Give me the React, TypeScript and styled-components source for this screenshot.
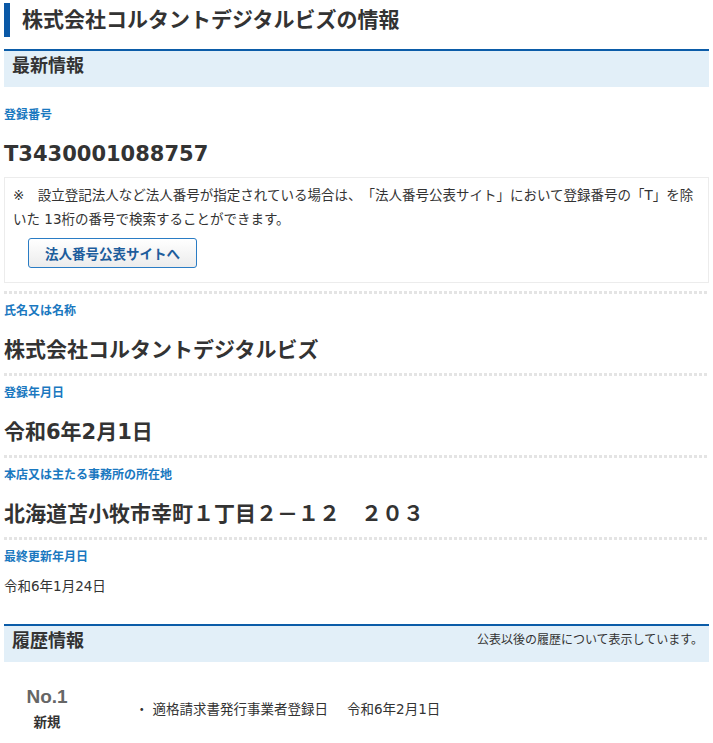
import React from 'react';
import styled, { createGlobalStyle } from 'styled-components';

const GlobalStyle = createGlobalStyle`
    body {
        margin: 0;
        background: #fff;
        color: #333;
        font-family: "DejaVu Sans", "Noto Sans CJK JP", sans-serif;
        text-spacing-trim: space-all;
    }
`;

interface IField {
    label: string;
    value: string;
    small?: boolean;
}

const fields: IField[] = [
    { label: '氏名又は名称', value: '株式会社コルタントデジタルビズ' },
    { label: '登録年月日', value: '令和6年2月1日' },
    { label: '本店又は主たる事務所の所在地', value: '北海道苫小牧市幸町１丁目２－１２　２０３' },
    { label: '最終更新年月日', value: '令和6年1月24日', small: true },
];

const FieldBlock: React.FC<IField> = ({ label, value, small }) => (
    <Field>
        <Label>{label}</Label>
        <Value $small={small}>{value}</Value>
    </Field>
);

export default function App() {
    return (
        <Page>
            <GlobalStyle />
            <Title>株式会社コルタントデジタルビズの情報</Title>

            <SectionHeader>
                <h3>最新情報</h3>
            </SectionHeader>
            <FieldList>
                <FieldBlock label="登録番号" value="T3430001088757" />
                <NoteBox>
                    <p>※　設立登記法人など法人番号が指定されている場合は、「法人番号公表サイト」において登録番号の「T」を除いた 13桁の番号で検索することができます。</p>
                    <SiteButton type="button">法人番号公表サイトへ</SiteButton>
                </NoteBox>
                {fields.map((f) => (
                    <React.Fragment key={f.label}>
                        <Separator />
                        <FieldBlock {...f} />
                    </React.Fragment>
                ))}
            </FieldList>

            <SectionHeader $spaced>
                <h3>履歴情報</h3>
                <small>公表以後の履歴について表示しています。</small>
            </SectionHeader>
            <HistoryRow>
                <HistoryNo>
                    <strong>No.1</strong>
                    <span>新規</span>
                </HistoryNo>
                <HistoryItem>
                    <span>・</span>
                    <span>適格請求書発行事業者登録日</span>
                    <span>令和6年2月1日</span>
                </HistoryItem>
            </HistoryRow>
        </Page>
    );
}

const Page = styled.div`
    padding: 3px 4px 0 4px;
`;

const Title = styled.h2`
    margin: 0;
    border-left: 6px solid #0a58a6;
    padding-left: 12px;
    font-size: 21px;
    font-weight: bold;
    line-height: 34px;
    color: #333;
`;

const SectionHeader = styled.div<{ $spaced?: boolean }>`
    margin-top: ${(p) => (p.$spaced ? '19px' : '12px')};
    border-top: 2px solid #0b5ca8;
    background-color: #e2eff8;
    height: 36px;
    padding: 0 6px 0 8px;
    display: flex;
    justify-content: space-between;
    align-items: flex-start;

    h3 {
        margin: 0;
        font-size: 18px;
        font-weight: bold;
        line-height: 30px;
    }

    small {
        font-size: 12px;
        line-height: 28px;
    }
`;

const FieldList = styled.div`
    padding-top: 11px;
`;

const Field = styled.div`
    padding: 8px 0;
`;

const Label = styled.div`
    font-size: 12px;
    font-weight: bold;
    line-height: 18px;
    color: #1a78c0;
`;

const Value = styled.div<{ $small?: boolean }>`
    margin-top: ${(p) => (p.$small ? '9px' : '15px')};
    font-size: ${(p) => (p.$small ? '13.5px' : '21px')};
    font-weight: ${(p) => (p.$small ? 'normal' : 'bold')};
    line-height: ${(p) => (p.$small ? '22px' : '30px')};
`;

const NoteBox = styled.div`
    border: 1px solid #ececec;
    padding: 5px 8px 14px 8px;
    margin-bottom: 8px;

    p {
        margin: 0;
        font-size: 13.5px;
        line-height: 24px;
    }
`;

const SiteButton = styled.button`
    display: block;
    margin: 7px 0 0 15px;
    height: 30px;
    padding: 0 16px;
    border: 1px solid #2a7cc4;
    border-radius: 3px;
    background: linear-gradient(#ffffff, #ececec);
    color: #1d5d9c;
    font-family: inherit;
    font-size: 13.5px;
    font-weight: bold;
`;

const Separator = styled.div`
    height: 3px;
    background-image: repeating-linear-gradient(90deg, #e4e4e4 0 3px, transparent 3px 5px);
`;

const HistoryRow = styled.div`
    display: flex;
    align-items: center;
    padding-top: 22px;
`;

const HistoryNo = styled.div`
    width: 86px;
    display: flex;
    flex-direction: column;
    align-items: center;

    strong {
        font-family: "Liberation Sans", sans-serif;
        font-size: 19px;
        line-height: 26px;
        color: #666;
    }

    span {
        font-size: 13.5px;
        font-weight: bold;
        line-height: 24px;
    }
`;

const HistoryItem = styled.div`
    margin-left: 45px;
    display: flex;
    font-size: 13.5px;
    line-height: 24px;

    span:first-child {
        margin-right: 4px;
    }

    span:nth-child(2) {
        margin-right: 19px;
    }
`;
